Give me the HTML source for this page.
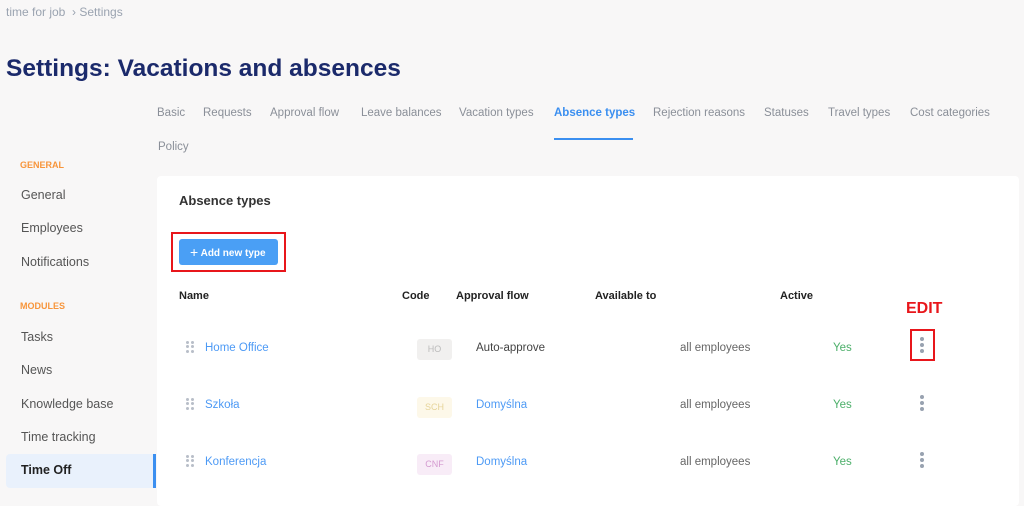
<!DOCTYPE html>
<html><head><meta charset="utf-8"><style>
*{margin:0;padding:0;box-sizing:border-box}
body{width:1024px;height:497px;overflow:hidden;background:#f8f7f7;font-family:"Liberation Sans",sans-serif;position:relative;color:#333}
.a{position:absolute;white-space:nowrap}
.crumb{font-size:12px;color:#9aa3b0;top:5px;left:6px}
h1{position:absolute;left:6px;top:55px;font-size:24.5px;font-weight:bold;color:#1b2a6b}
.tab{font-size:11.5px;color:#8a8f98;top:107px}
.sec{font-size:9px;font-weight:bold;color:#f7953b;left:20px}
.nav{font-size:12.5px;color:#555;left:21px}
.card{position:absolute;left:157px;top:176px;width:862px;height:330px;background:#fff;border-radius:4px}
.th{font-size:11px;font-weight:bold;color:#222;top:290px}
.name{font-size:11.5px;color:#4d9af5;left:205px}
.code{left:417px;width:35px;height:21px;border-radius:3px;font-size:9px;text-align:center;line-height:21px}
.flow{font-size:11.5px;left:476px}
.emp{font-size:11.5px;color:#666;left:680px}
.yes{font-size:11.5px;color:#4caf6a;left:833px}
.drag{left:186px;width:8px;height:12px}
.drag i{position:absolute;width:3px;height:3px;border-radius:50%;background:#b8bec8}
.dots{left:920px;width:4px}
.dots i{position:absolute;left:0;width:4px;height:4px;border-radius:50%;background:#98a2b0}
</style></head><body>
<div class="a crumb">time for job &nbsp;›&nbsp;Settings</div>
<h1>Settings: Vacations and absences</h1>

<div class="a tab" style="left:157px">Basic</div>
<div class="a tab" style="left:203px">Requests</div>
<div class="a tab" style="left:270px">Approval flow</div>
<div class="a tab" style="left:361px">Leave balances</div>
<div class="a tab" style="left:459px">Vacation types</div>
<div class="a tab" style="left:554px;color:#3b8ff0;font-weight:bold">Absence types</div>
<div class="a" style="left:554px;top:138px;width:79px;height:2px;background:#3b8ff0"></div>
<div class="a tab" style="left:653px">Rejection reasons</div>
<div class="a tab" style="left:764px">Statuses</div>
<div class="a tab" style="left:828px">Travel types</div>
<div class="a tab" style="left:910px">Cost categories</div>
<div class="a tab" style="left:158px;top:141px">Policy</div>

<div class="a sec" style="top:160px">GENERAL</div>
<div class="a nav" style="top:188px">General</div>
<div class="a nav" style="top:221px">Employees</div>
<div class="a nav" style="top:255px">Notifications</div>
<div class="a sec" style="top:301px">MODULES</div>
<div class="a nav" style="top:330px">Tasks</div>
<div class="a nav" style="top:363px">News</div>
<div class="a nav" style="top:397px">Knowledge base</div>
<div class="a nav" style="top:430px">Time tracking</div>
<div class="a" style="left:6px;top:454px;width:150px;height:34px;background:#e9f1fc;border-radius:4px 0 0 4px;border-right:3px solid #3b8ff0"></div>
<div class="a nav" style="top:463px;font-weight:bold;color:#222">Time Off</div>

<div class="card"></div>
<div class="a" style="left:179px;top:193px;font-size:13px;font-weight:bold;color:#333">Absence types</div>
<div class="a" style="left:171px;top:232px;width:115px;height:40px;border:2px solid #e8161b"></div>
<div class="a" style="left:179px;top:239px;width:99px;height:26px;background:#4a9ff5;border-radius:3px;color:#fff;font-size:10px;font-weight:bold;line-height:26px;padding-left:11px"><span style="font-size:14px;font-weight:normal;vertical-align:-1px">+</span> Add new type</div>

<div class="a th" style="left:179px">Name</div>
<div class="a th" style="left:402px">Code</div>
<div class="a th" style="left:456px">Approval flow</div>
<div class="a th" style="left:595px">Available to</div>
<div class="a th" style="left:780px">Active</div>
<div class="a" style="left:906px;top:300px;font-size:16px;font-weight:bold;color:#e8161b">EDIT</div>

<div class="a drag" style="top:341px"><i style="left:0;top:0"></i><i style="left:5px;top:0"></i><i style="left:0;top:4px"></i><i style="left:5px;top:4px"></i><i style="left:0;top:9px"></i><i style="left:5px;top:9px"></i></div>
<div class="a name" style="top:342px">Home Office</div>
<div class="a code" style="top:339px;background:#f1f0ef;color:#bbb">HO</div>
<div class="a flow" style="top:342px;color:#444">Auto-approve</div>
<div class="a emp" style="top:342px">all employees</div>
<div class="a yes" style="top:342px">Yes</div>
<div class="a" style="left:910px;top:329px;width:25px;height:32px;border:2px solid #e8161b"></div>
<div class="a dots" style="top:337px;height:16px"><i style="top:0"></i><i style="top:6px"></i><i style="top:12px"></i></div>

<div class="a drag" style="top:398px"><i style="left:0;top:0"></i><i style="left:5px;top:0"></i><i style="left:0;top:4px"></i><i style="left:5px;top:4px"></i><i style="left:0;top:9px"></i><i style="left:5px;top:9px"></i></div>
<div class="a name" style="top:399px">Szkoła</div>
<div class="a code" style="top:397px;background:#fdf8e9;color:#e6d49a">SCH</div>
<div class="a flow" style="top:399px;color:#4d9af5">Domyślna</div>
<div class="a emp" style="top:399px">all employees</div>
<div class="a yes" style="top:399px">Yes</div>
<div class="a dots" style="top:395px;height:16px"><i style="top:0"></i><i style="top:6px"></i><i style="top:12px"></i></div>

<div class="a drag" style="top:455px"><i style="left:0;top:0"></i><i style="left:5px;top:0"></i><i style="left:0;top:4px"></i><i style="left:5px;top:4px"></i><i style="left:0;top:9px"></i><i style="left:5px;top:9px"></i></div>
<div class="a name" style="top:456px">Konferencja</div>
<div class="a code" style="top:454px;background:#f8ecf7;color:#d49ad0">CNF</div>
<div class="a flow" style="top:456px;color:#4d9af5">Domyślna</div>
<div class="a emp" style="top:456px">all employees</div>
<div class="a yes" style="top:456px">Yes</div>
<div class="a dots" style="top:452px;height:16px"><i style="top:0"></i><i style="top:6px"></i><i style="top:12px"></i></div>
</body></html>
